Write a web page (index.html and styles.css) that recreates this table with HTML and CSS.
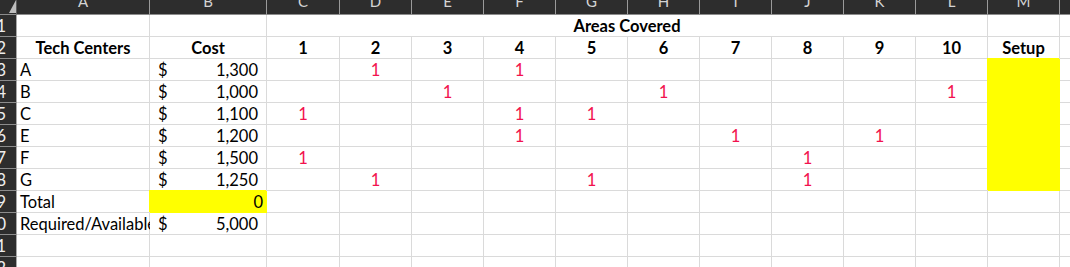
FILE: index.html
```html
<!DOCTYPE html>
<html>
<head>
    <meta charset="utf-8">
    <title>Tech Centers</title>
    <link rel="stylesheet" href="styles.css">
</head>
<body>
    <div class="sheet">
        <!-- column letters -->
        <div class="corner">
            <svg width="16" height="14" viewBox="0 0 16 14"><polygon points="9,13 16,13 16,0" fill="#bdbdbd"/></svg>
        </div>
        <div class="col-head"><span>A</span></div>
        <div class="col-head"><span>B</span></div>
        <div class="col-head"><span>C</span></div>
        <div class="col-head"><span>D</span></div>
        <div class="col-head"><span>E</span></div>
        <div class="col-head"><span>F</span></div>
        <div class="col-head"><span>G</span></div>
        <div class="col-head"><span>H</span></div>
        <div class="col-head"><span>I</span></div>
        <div class="col-head"><span>J</span></div>
        <div class="col-head"><span>K</span></div>
        <div class="col-head"><span>L</span></div>
        <div class="col-head"><span>M</span></div>
        <div class="col-head"><span>N</span></div>

        <!-- row 1 -->
        <div class="row-head"><span>1</span></div>
        <div class="cell"></div>
        <div class="cell"></div>
        <div class="cell hdr span-areas">Areas Covered</div>
        <div class="cell"></div>
        <div class="cell"></div>

        <!-- row 2 -->
        <div class="row-head"><span>2</span></div>
        <div class="cell hdr">Tech Centers</div>
        <div class="cell hdr">Cost</div>
        <div class="cell hdr">1</div>
        <div class="cell hdr">2</div>
        <div class="cell hdr">3</div>
        <div class="cell hdr">4</div>
        <div class="cell hdr">5</div>
        <div class="cell hdr">6</div>
        <div class="cell hdr">7</div>
        <div class="cell hdr">8</div>
        <div class="cell hdr">9</div>
        <div class="cell hdr">10</div>
        <div class="cell hdr">Setup</div>
        <div class="cell"></div>

        <!-- row 3 -->
        <div class="row-head"><span>3</span></div>
        <div class="cell name">A</div>
        <div class="cell acct"><span>$</span><span>1,300</span></div>
        <div class="cell"></div>
        <div class="cell flag">1</div>
        <div class="cell"></div>
        <div class="cell flag">1</div>
        <div class="cell"></div>
        <div class="cell"></div>
        <div class="cell"></div>
        <div class="cell"></div>
        <div class="cell"></div>
        <div class="cell"></div>
        <div class="cell fill"></div>
        <div class="cell"></div>

        <!-- row 4 -->
        <div class="row-head"><span>4</span></div>
        <div class="cell name">B</div>
        <div class="cell acct"><span>$</span><span>1,000</span></div>
        <div class="cell"></div>
        <div class="cell"></div>
        <div class="cell flag">1</div>
        <div class="cell"></div>
        <div class="cell"></div>
        <div class="cell flag">1</div>
        <div class="cell"></div>
        <div class="cell"></div>
        <div class="cell"></div>
        <div class="cell flag">1</div>
        <div class="cell fill"></div>
        <div class="cell"></div>

        <!-- row 5 -->
        <div class="row-head"><span>5</span></div>
        <div class="cell name">C</div>
        <div class="cell acct"><span>$</span><span>1,100</span></div>
        <div class="cell flag">1</div>
        <div class="cell"></div>
        <div class="cell"></div>
        <div class="cell flag">1</div>
        <div class="cell flag">1</div>
        <div class="cell"></div>
        <div class="cell"></div>
        <div class="cell"></div>
        <div class="cell"></div>
        <div class="cell"></div>
        <div class="cell fill"></div>
        <div class="cell"></div>

        <!-- row 6 -->
        <div class="row-head"><span>6</span></div>
        <div class="cell name">E</div>
        <div class="cell acct"><span>$</span><span>1,200</span></div>
        <div class="cell"></div>
        <div class="cell"></div>
        <div class="cell"></div>
        <div class="cell flag">1</div>
        <div class="cell"></div>
        <div class="cell"></div>
        <div class="cell flag">1</div>
        <div class="cell"></div>
        <div class="cell flag">1</div>
        <div class="cell"></div>
        <div class="cell fill"></div>
        <div class="cell"></div>

        <!-- row 7 -->
        <div class="row-head"><span>7</span></div>
        <div class="cell name">F</div>
        <div class="cell acct"><span>$</span><span>1,500</span></div>
        <div class="cell flag">1</div>
        <div class="cell"></div>
        <div class="cell"></div>
        <div class="cell"></div>
        <div class="cell"></div>
        <div class="cell"></div>
        <div class="cell"></div>
        <div class="cell flag">1</div>
        <div class="cell"></div>
        <div class="cell"></div>
        <div class="cell fill"></div>
        <div class="cell"></div>

        <!-- row 8 -->
        <div class="row-head"><span>8</span></div>
        <div class="cell name">G</div>
        <div class="cell acct"><span>$</span><span>1,250</span></div>
        <div class="cell"></div>
        <div class="cell flag">1</div>
        <div class="cell"></div>
        <div class="cell"></div>
        <div class="cell flag">1</div>
        <div class="cell"></div>
        <div class="cell"></div>
        <div class="cell flag">1</div>
        <div class="cell"></div>
        <div class="cell"></div>
        <div class="cell fill"></div>
        <div class="cell"></div>

        <!-- row 9 -->
        <div class="row-head"><span>9</span></div>
        <div class="cell name">Total</div>
        <div class="cell fill total">0</div>
        <div class="cell"></div>
        <div class="cell"></div>
        <div class="cell"></div>
        <div class="cell"></div>
        <div class="cell"></div>
        <div class="cell"></div>
        <div class="cell"></div>
        <div class="cell"></div>
        <div class="cell"></div>
        <div class="cell"></div>
        <div class="cell"></div>
        <div class="cell"></div>

        <!-- row 10 -->
        <div class="row-head"><span>10</span></div>
        <div class="cell name">Required/Available</div>
        <div class="cell acct"><span>$</span><span>5,000</span></div>
        <div class="cell"></div>
        <div class="cell"></div>
        <div class="cell"></div>
        <div class="cell"></div>
        <div class="cell"></div>
        <div class="cell"></div>
        <div class="cell"></div>
        <div class="cell"></div>
        <div class="cell"></div>
        <div class="cell"></div>
        <div class="cell"></div>
        <div class="cell"></div>

        <!-- row 11 -->
        <div class="row-head"><span>11</span></div>
        <div class="cell"></div>
        <div class="cell"></div>
        <div class="cell"></div>
        <div class="cell"></div>
        <div class="cell"></div>
        <div class="cell"></div>
        <div class="cell"></div>
        <div class="cell"></div>
        <div class="cell"></div>
        <div class="cell"></div>
        <div class="cell"></div>
        <div class="cell"></div>
        <div class="cell"></div>
        <div class="cell"></div>

        <!-- row 12 -->
        <div class="row-head"><span>12</span></div>
        <div class="cell"></div>
        <div class="cell"></div>
        <div class="cell"></div>
        <div class="cell"></div>
        <div class="cell"></div>
        <div class="cell"></div>
        <div class="cell"></div>
        <div class="cell"></div>
        <div class="cell"></div>
        <div class="cell"></div>
        <div class="cell"></div>
        <div class="cell"></div>
        <div class="cell"></div>
        <div class="cell"></div>
    </div>
</body>
</html>
```

FILE: styles.css
```css
html, body {
    margin: 0;
    padding: 0;
    background: #fff;
    overflow: hidden;
}

body {
    width: 1070px;
    height: 267px;
    font-family: "Lato", "Liberation Sans", sans-serif;
    font-size: 16.5px;
    color: #000;
}

.sheet {
    display: grid;
    grid-template-columns: 17px 133px 117px 73px repeat(9, 72px) 72px 60px;
    grid-template-rows: 15px;
    grid-auto-rows: 22px;
    width: max-content;
}

/* headers */
.corner,
.col-head,
.row-head {
    box-sizing: border-box;
    background: #2d2d2d;
    overflow: hidden;
}

.corner {
    border-right: 1px solid #5c5c5c;
    border-bottom: 1px solid #8c8c8c;
}

.corner svg {
    display: block;
}

.col-head {
    display: flex;
    justify-content: center;
    align-items: flex-end;
    border-right: 1px solid #9a9a9a;
    border-bottom: 1px solid #8c8c8c;
    color: #d4d4d4;
    font-size: 15px;
}

.col-head span {
    line-height: 18px;
    margin-bottom: 4px;
}

.row-head {
    display: flex;
    justify-content: flex-end;
    align-items: flex-end;
    padding-right: 9px;
    border-right: 1px solid #a8a8a8;
    border-bottom: 1px solid #8c8c8c;
    color: #ececec;
    font-size: 17px;
}

.row-head span {
    line-height: 18px;
    margin-bottom: 1px;
    margin-right: 1px;
}

/* cells */
.cell {
    box-sizing: border-box;
    display: flex;
    align-items: flex-end;
    border-right: 1px solid #dadada;
    border-bottom: 1px solid #dadada;
    line-height: 18px;
    padding-bottom: 1px;
    white-space: nowrap;
    overflow: hidden;
    min-width: 0;
}

.hdr {
    justify-content: center;
    font-weight: 700;
}

.span-areas {
    grid-column: span 10;
}

.name {
    padding-left: 3px;
    overflow: visible;
    position: relative;
    z-index: 1;
}

.acct {
    justify-content: space-between;
    padding: 0 8px 1px 8px;
    background: #fff;
    position: relative;
    z-index: 2;
}

.flag {
    justify-content: center;
    color: #f2124e;
}

.fill {
    background: #ffff00;
    border-color: #ffff00;
    box-shadow: -1px -1px 0 #ffff00;
    position: relative;
    z-index: 2;
}

.total {
    justify-content: flex-end;
    padding-right: 3px;
}
```
